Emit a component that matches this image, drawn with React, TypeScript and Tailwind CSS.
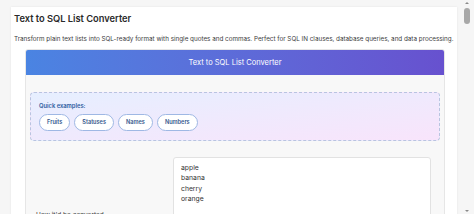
import React, { useState } from 'react';

const examples: Record<string, string> = {
  Fruits: 'apple\nbanana\ncherry\norange',
  Statuses: 'active\npending\ninactive\narchived',
  Names: 'John\nJane\nMike\nSarah',
  Numbers: '101\n202\n303\n404',
};

const App: React.FC = () => {
  const [input, setInput] = useState(examples.Fruits);

  return (
    <div className="relative h-[214px] overflow-hidden bg-[#f6f6f6] pt-[7px] font-['Inter',sans-serif] text-[#2d2d2d]">
      <div className="ml-[11px] w-[446px] bg-white px-[3px] pt-[6px] pb-6 shadow-[0_0_2px_rgba(0,0,0,0.08)]">
        <h1 className="text-[9.3px] font-semibold leading-[12px] text-[#2a2a2a]">Text to SQL List Converter</h1>
        <p className="mt-[10px] text-[6.3px] leading-[8px] text-[#3c3c3c] whitespace-nowrap">
          Transform plain text lists into SQL-ready format with single quotes and commas. Perfect for SQL IN clauses, database queries, and data processing.
        </p>

        {/* Converter */}
        <div className="mt-[6px] ml-[11px] w-[420px] overflow-hidden rounded-t-[3px] border border-[#e6e6e6] bg-[#f8f8f8]">
          <div className="flex h-[25px] items-center justify-center bg-gradient-to-r from-[#4a84e2] to-[#6751cf] text-[7.5px] text-white">
            Text to SQL List Converter
          </div>

          <div className="px-[4px] pt-[17px]">
            <div className="rounded-[4px] border border-dashed border-[#b9c4e0] bg-gradient-to-br from-[#e6efff] to-[#f8e4fb] px-[8px] pt-[9px] pb-[9px]">
              <div className="text-[5.8px] font-semibold leading-[8px] text-[#2d5b9e]">Quick examples:</div>
              <div className="mt-[4px] flex gap-[4px]">
                {Object.keys(examples).map((name) => (
                  <button
                    key={name}
                    onClick={() => setInput(examples[name])}
                    className="h-[17px] rounded-full border border-[#9fb8e4] bg-white px-[7px] text-[5.6px] font-semibold text-[#33568c]"
                  >
                    {name}
                  </button>
                ))}
              </div>
            </div>

            <div className="mt-[16px] flex">
              <div className="w-[143px] shrink-0" />
              <textarea
                value={input}
                onChange={(e) => setInput(e.target.value)}
                className="h-[120px] w-[258px] resize-none rounded-[3px] border border-[#e2e2e2] bg-white px-[7px] py-[5px] text-[6.8px] leading-[10.3px] text-[#333] outline-none"
              />
            </div>

            <div className="-mt-[66px] ml-[6px] text-[6.5px] text-[#333]">How it'd be converted</div>
          </div>
        </div>
      </div>

      {/* window scrollbar */}
      <div className="absolute right-0 top-0 flex h-full w-[14px] flex-col items-center">
        <div className="mt-[2px] h-0 w-0 border-x-[2px] border-b-[2px] border-x-transparent border-b-[#8a8a8a]" />
        <div className="mt-[4px] h-[16px] w-[6px] rounded-[3px] bg-[#a8a8a8]" />
        <div className="mt-auto mb-[2px] h-0 w-0 border-x-[2px] border-t-[2px] border-x-transparent border-t-[#8a8a8a]" />
      </div>
    </div>
  );
};

export default App;
